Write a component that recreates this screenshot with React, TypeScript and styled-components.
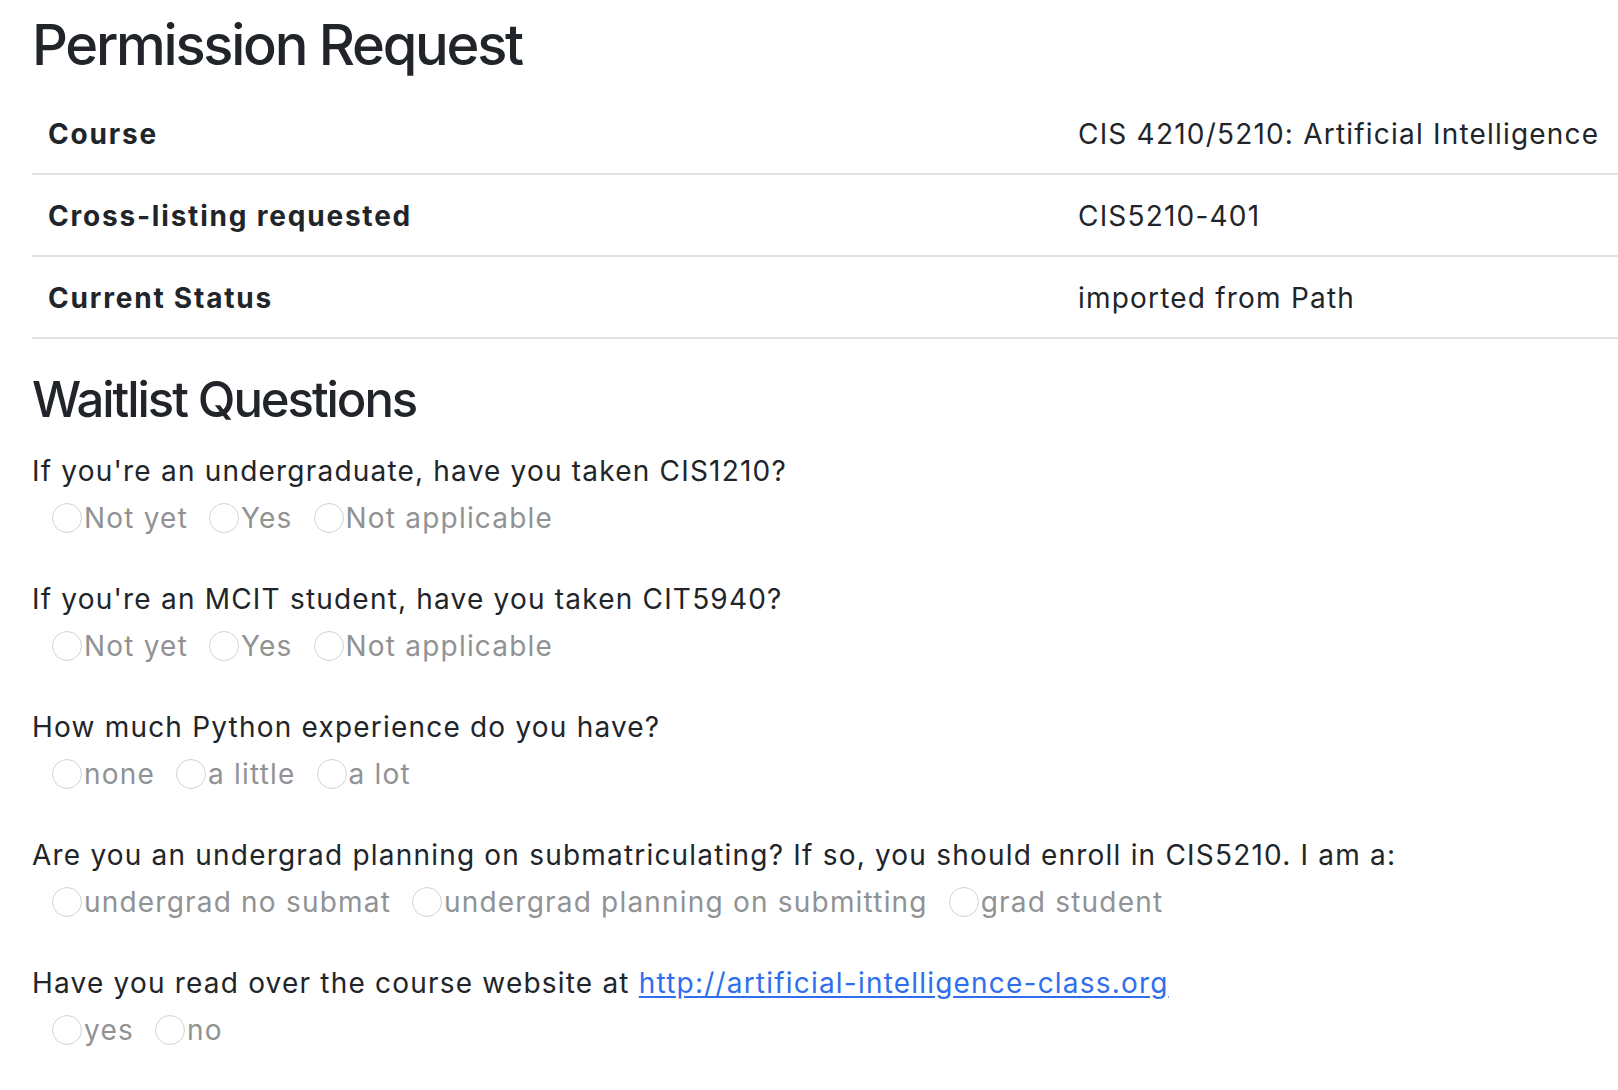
import React from "react";
import styled, { createGlobalStyle } from "styled-components";

const GlobalStyle = createGlobalStyle`
    html, body {
        margin: 0;
        padding: 0;
        background: #ffffff;
    }

    body {
        font-family: Inter, "Noto Sans", "Liberation Sans", sans-serif;
        color: #212529;
        font-size: 28px;
        line-height: 1.5;
        letter-spacing: 1.2px;
    }
`;

const Page = styled.div`
    padding: 12px 0 40px 32px;
    box-sizing: border-box;
    width: 100%;
`;

const Title = styled.h2`
    margin: 0 0 14px;
    font-size: 56px;
    font-weight: 500;
    line-height: 1.2;
    letter-spacing: -2.25px;
`;

const InfoTable = styled.table`
    width: 100%;
    border-collapse: collapse;
    margin-bottom: 32px;
`;

const Row = styled.tr`
    border-bottom: 2px solid #dee2e6;
`;

const Label = styled.th`
    width: 1032px;
    box-sizing: border-box;
    padding: 20px 14px 18px 16px;
    text-align: left;
    font-weight: 700;
    line-height: 42px;
    letter-spacing: 1.8px;
`;

const Value = styled.td`
    padding: 20px 14px 18px;
    line-height: 42px;
    white-space: nowrap;
`;

const SectionTitle = styled.h3`
    margin: 0 0 20px;
    font-size: 49px;
    font-weight: 500;
    line-height: 1.2;
    letter-spacing: -2.05px;
`;

const Question = styled.div`
    margin-bottom: 39px;
`;

const Prompt = styled.div`
    line-height: 42px;
    margin-bottom: 5px;
`;

const Link = styled.a`
    color: #2f6fed;
    text-decoration: underline;
    text-underline-offset: 3px;
`;

const Options = styled.div`
    display: flex;
    align-items: center;
    gap: 21px;
    padding-left: 20px;
    line-height: 42px;
`;

const Option = styled.label`
    display: inline-flex;
    align-items: center;
    gap: 2px;
    color: #909294;
`;

const Radio = styled.input`
    appearance: none;
    -webkit-appearance: none;
    width: 30px;
    height: 30px;
    margin: 0;
    border-radius: 50%;
    border: 1.5px solid #d2d2d2;
    background: #ffffff;
    box-sizing: border-box;
`;

interface QuestionData {
    name: string
    prompt: React.ReactNode
    choices: string[]
}

const details: [string, string][] = [
    ["Course", "CIS 4210/5210: Artificial Intelligence"],
    ["Cross-listing requested", "CIS5210-401"],
    ["Current Status", "imported from Path"],
];

const questions: QuestionData[] = [
    {
        name: "q1",
        prompt: "If you're an undergraduate, have you taken CIS1210?",
        choices: ["Not yet", "Yes", "Not applicable"],
    },
    {
        name: "q2",
        prompt: "If you're an MCIT student, have you taken CIT5940?",
        choices: ["Not yet", "Yes", "Not applicable"],
    },
    {
        name: "q3",
        prompt: "How much Python experience do you have?",
        choices: ["none", "a little", "a lot"],
    },
    {
        name: "q4",
        prompt: "Are you an undergrad planning on submatriculating? If so, you should enroll in CIS5210. I am a:",
        choices: ["undergrad no submat", "undergrad planning on submitting", "grad student"],
    },
    {
        name: "q5",
        prompt: (
            <>
                Have you read over the course website at{" "}
                <Link href="#">http://artificial-intelligence-class.org</Link>
            </>
        ),
        choices: ["yes", "no"],
    },
];

const App: React.FC = () => {
    return <>
        <GlobalStyle />
        <Page>
            <Title>Permission Request</Title>
            <InfoTable>
                <tbody>
                    {details.map(([label, value]) => (
                        <Row key={label}>
                            <Label>{label}</Label>
                            <Value>{value}</Value>
                        </Row>
                    ))}
                </tbody>
            </InfoTable>

            <SectionTitle>Waitlist Questions</SectionTitle>
            {questions.map((q) => (
                <Question key={q.name}>
                    <Prompt>{q.prompt}</Prompt>
                    <Options>
                        {q.choices.map((c) => (
                            <Option key={c}>
                                <Radio type="radio" name={q.name} disabled />
                                {c}
                            </Option>
                        ))}
                    </Options>
                </Question>
            ))}
        </Page>
    </>
}

export default App
